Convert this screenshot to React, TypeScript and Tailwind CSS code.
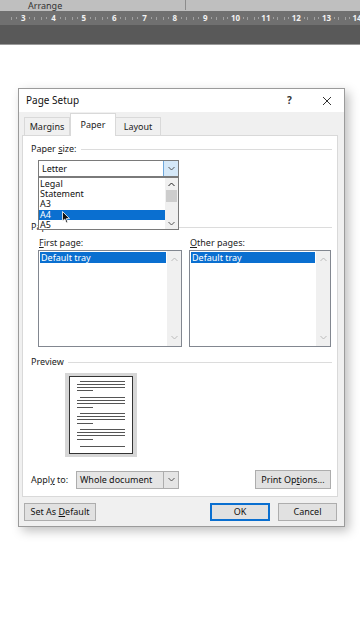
import React from "react";

const font = { fontFamily: '"Noto Sans", "Open Sans", sans-serif' };

const rulerNums = [3, 4, 5, 6, 7, 8, 9, 10, 11, 12, 13, 14];

function ChevDown() {
  return (
    <svg width="7" height="5" viewBox="0 0 7 5">
      <path d="M0.5 1 L3.5 4 L6.5 1" fill="none" stroke="#555" strokeWidth="1" />
    </svg>
  );
}

function ChevUp({ color = "#555" }: { color?: string }) {
  return (
    <svg width="7" height="5" viewBox="0 0 7 5">
      <path d="M0.5 4 L3.5 1 L6.5 4" fill="none" stroke={color} strokeWidth="1" />
    </svg>
  );
}

function GroupLabel({ text, children }: { text?: string; children?: React.ReactNode }) {
  return (
    <div className="flex items-center h-[12px]">
      <span className="text-[9px] leading-[12px] text-[#222] pr-[4px]">{children ?? text}</span>
      <div className="flex-1 h-px bg-[#dcdcdc] mr-[5px]" />
    </div>
  );
}

function TrayList() {
  return (
    <div className="flex h-[97px] border border-[#828790] bg-white">
      <div className="flex-1 p-px">
        <div className="h-[11px] bg-[#0a6fd0] text-white text-[9px] leading-[11px] pl-[1px]">
          Default tray
        </div>
      </div>
      <div className="w-[14px] bg-[#f0f0f0] flex flex-col items-center justify-between py-[6px]">
        <ChevUp color="#bbb" />
        <svg width="7" height="5" viewBox="0 0 7 5">
          <path d="M0.5 1 L3.5 4 L6.5 1" fill="none" stroke="#bbb" strokeWidth="1" />
        </svg>
      </div>
    </div>
  );
}

function PreviewPage() {
  const lines: [number, number, number][] = [
    [5, 11, 56], [8, 8, 56], [11, 8, 56], [14, 8, 24],
    [21, 11, 56], [24, 8, 56], [27, 8, 56], [31, 8, 24],
    [37, 11, 56], [40, 8, 56], [43, 8, 56], [47, 8, 24],
    [53, 11, 56], [56, 8, 56], [59, 8, 56], [63, 8, 24],
    [70, 11, 56],
  ];
  return (
    <svg width="64" height="78" viewBox="0 0 64 78">
      <rect x="0.5" y="0.5" width="63" height="77" fill="#fff" stroke="#333" />
      {lines.map(([y, x1, x2], i) => (
        <line key={i} x1={x1} x2={x2} y1={y + 0.5} y2={y + 0.5} stroke="#555" strokeWidth="1" />
      ))}
    </svg>
  );
}

export default function App() {
  return (
    <div className="w-[360px] h-[640px] bg-white overflow-hidden relative" style={font}>
      {/* ribbon bottom */}
      <div className="h-[11px] bg-[#bfbfbf] flex items-end relative">
        <span className="ml-[28px] text-[9px] leading-[10px] text-[#333]">Arrange</span>
        <div className="absolute left-[185px] top-0 h-[10px] w-px bg-[#8c8c8c]" />
      </div>
      {/* ruler */}
      <div className="h-[14px] bg-[#707070] flex items-center">
        <div className="ml-[8px] flex">
          {rulerNums.map((n) => (
            <div key={n} className="w-[30.35px] flex items-center justify-between px-[3px]">
              <span className="w-px h-[3px] bg-[#a0a0a0]" />
              <span className="w-px h-[2px] bg-[#a0a0a0]" />
              <span className="text-[8px] leading-[10px] text-[#f2f2f2] font-bold">{n}</span>
              <span className="w-px h-[2px] bg-[#a0a0a0]" />
              <span className="w-px h-[3px] bg-[#a0a0a0]" />
            </div>
          ))}
        </div>
      </div>
      <div className="h-[19px] bg-[#595959]" />
      <div className="h-px bg-[#9a9a9a]" />

      {/* dialog */}
      <div className="ml-[18px] mt-[43px] w-[327px] h-[439px] border border-[#9b9b9b] bg-[#f0f0f0] shadow-[4px_4px_10px_rgba(0,0,0,0.25)] flex flex-col">
        {/* title */}
        <div className="h-[23px] bg-white flex items-center relative">
          <span className="ml-[7px] text-[10px] text-[#111]">Page Setup</span>
          <span className="absolute left-[268px] text-[10px] font-bold text-[#333]">?</span>
          <svg className="absolute left-[303px]" width="10" height="10" viewBox="0 0 10 10">
            <path d="M1 1 L9 9 M9 1 L1 9" stroke="#333" strokeWidth="1" />
          </svg>
        </div>
        {/* tabs */}
        <div className="h-[23px] flex items-end pl-[5px]">
          <div className="h-[18px] w-[46px] border border-b-0 border-[#d9d9d9] bg-[#f0f0f0] flex items-center justify-center text-[9px] text-[#222]">
            Margins
          </div>
          <div className="h-[23px] w-[46px] border border-b-0 border-[#d9d9d9] bg-white flex items-center justify-center text-[9px] text-[#222] -mb-px relative z-10">
            Paper
          </div>
          <div className="h-[18px] w-[45px] border border-b-0 border-l-0 border-[#d9d9d9] bg-[#f0f0f0] flex items-center justify-center text-[9px] text-[#222]">
            Layout
          </div>
        </div>
        {/* panel */}
        <div className="ml-[3px] w-[316px] h-[362px] border border-[#d9d9d9] bg-white pl-[8px] flex flex-col">
          <div className="mt-[7px]">
            <GroupLabel>
              Paper <span className="underline">s</span>ize:
            </GroupLabel>
          </div>
          <div className="mt-[5px] ml-[7px] w-[141px] relative">
            <div className="h-[17px] border border-[#7a7a7a] bg-white flex items-center">
              <span className="flex-1 pl-[3px] text-[9px] text-[#111]">Letter</span>
              <div className="w-[15px] h-full bg-[#d5e8f8] border-l border-[#6fa8dc] flex items-center justify-center">
                <ChevDown />
              </div>
            </div>
            {/* open dropdown */}
            <div className="absolute left-0 top-[17px] w-[141px] h-[53px] border border-[#7a7a7a] bg-white flex z-20">
              <div className="flex-1 flex flex-col text-[9px] leading-[10.2px] text-[#111] pt-[1px]">
                <div className="pl-[1px]">Legal</div>
                <div className="pl-[1px]">Statement</div>
                <div className="pl-[1px]">A3</div>
                <div className="pl-[1px] bg-[#0a6fd0] text-white relative">
                  A4
                  <svg className="absolute left-[23px] top-[1px]" width="9" height="13" viewBox="0 0 9 13">
                    <path d="M0.5 0.5 L0.5 10 L2.8 8 L4.3 11.8 L5.8 11.2 L4.3 7.6 L7.5 7.6 Z" fill="#111" stroke="#fff" strokeWidth="0.8" />
                  </svg>
                </div>
                <div className="pl-[1px]">A5</div>
              </div>
              <div className="w-[13px] bg-[#f0f0f0] flex flex-col items-center">
                <div className="h-[12px] flex items-center justify-center"><ChevUp color="#222" /></div>
                <div className="w-[11px] h-[12px] bg-[#cdcdcd]" />
                <div className="flex-1" />
                <div className="h-[12px] flex items-center justify-center"><ChevDown /></div>
              </div>
            </div>
          </div>
          <div className="mt-[44px]">
            <GroupLabel text="Paper source" />
          </div>
          <div className="mt-[4px] ml-[7px] flex gap-[7px] pr-[5px]">
            <div className="w-[144px] flex flex-col">
              <span className="text-[9px] leading-[12px] text-[#222] pl-[1px]">
                <span className="underline">F</span>irst page:
              </span>
              <div className="mt-[1px]"><TrayList /></div>
            </div>
            <div className="w-[142px] flex flex-col">
              <span className="text-[9px] leading-[12px] text-[#222] pl-[1px]">
                <span className="underline">O</span>ther pages:
              </span>
              <div className="mt-[1px]"><TrayList /></div>
            </div>
          </div>
          <div className="mt-[9px]">
            <GroupLabel text="Preview" />
          </div>
          <div className="mt-[5px] ml-[34px] w-[72px] h-[84px] bg-[#d6d6d6] flex items-center justify-center">
            <PreviewPage />
          </div>
          <div className="mt-[13px] flex items-center">
            <span className="text-[9px] text-[#222] w-[45px]">
              Appl<span className="underline">y</span> to:
            </span>
            <div className="w-[103px] h-[18px] border border-[#adadad] bg-[#e5e5e5] flex items-center">
              <span className="flex-1 pl-[3px] text-[9px] text-[#111]">Whole document</span>
              <div className="w-[15px] h-full border-l border-[#adadad] flex items-center justify-center">
                <ChevDown />
              </div>
            </div>
            <div className="flex-1" />
            <div className="mr-[6px] w-[76px] h-[19px] border border-[#adadad] bg-[#e1e1e1] flex items-center justify-center text-[9px] text-[#111]">
              <span>
                Print Op<span className="underline">t</span>ions...
              </span>
            </div>
          </div>
        </div>
        {/* footer */}
        <div className="flex items-center mt-[6px] px-[5px]">
          <div className="w-[72px] h-[18px] border border-[#adadad] bg-[#e1e1e1] flex items-center justify-center text-[9px] text-[#111]">
            <span>
              Set As <span className="underline">D</span>efault
            </span>
          </div>
          <div className="flex-1" />
          <div className="w-[60px] h-[18px] border border-[#0a6fd0] bg-[#e1e1e1] flex items-center justify-center text-[9px] text-[#111] shadow-[inset_0_0_0_1px_#0a6fd0]">
            OK
          </div>
          <div className="ml-[8px] mr-[2px] w-[59px] h-[18px] border border-[#adadad] bg-[#e1e1e1] flex items-center justify-center text-[9px] text-[#111]">
            Cancel
          </div>
        </div>
      </div>
    </div>
  );
}
